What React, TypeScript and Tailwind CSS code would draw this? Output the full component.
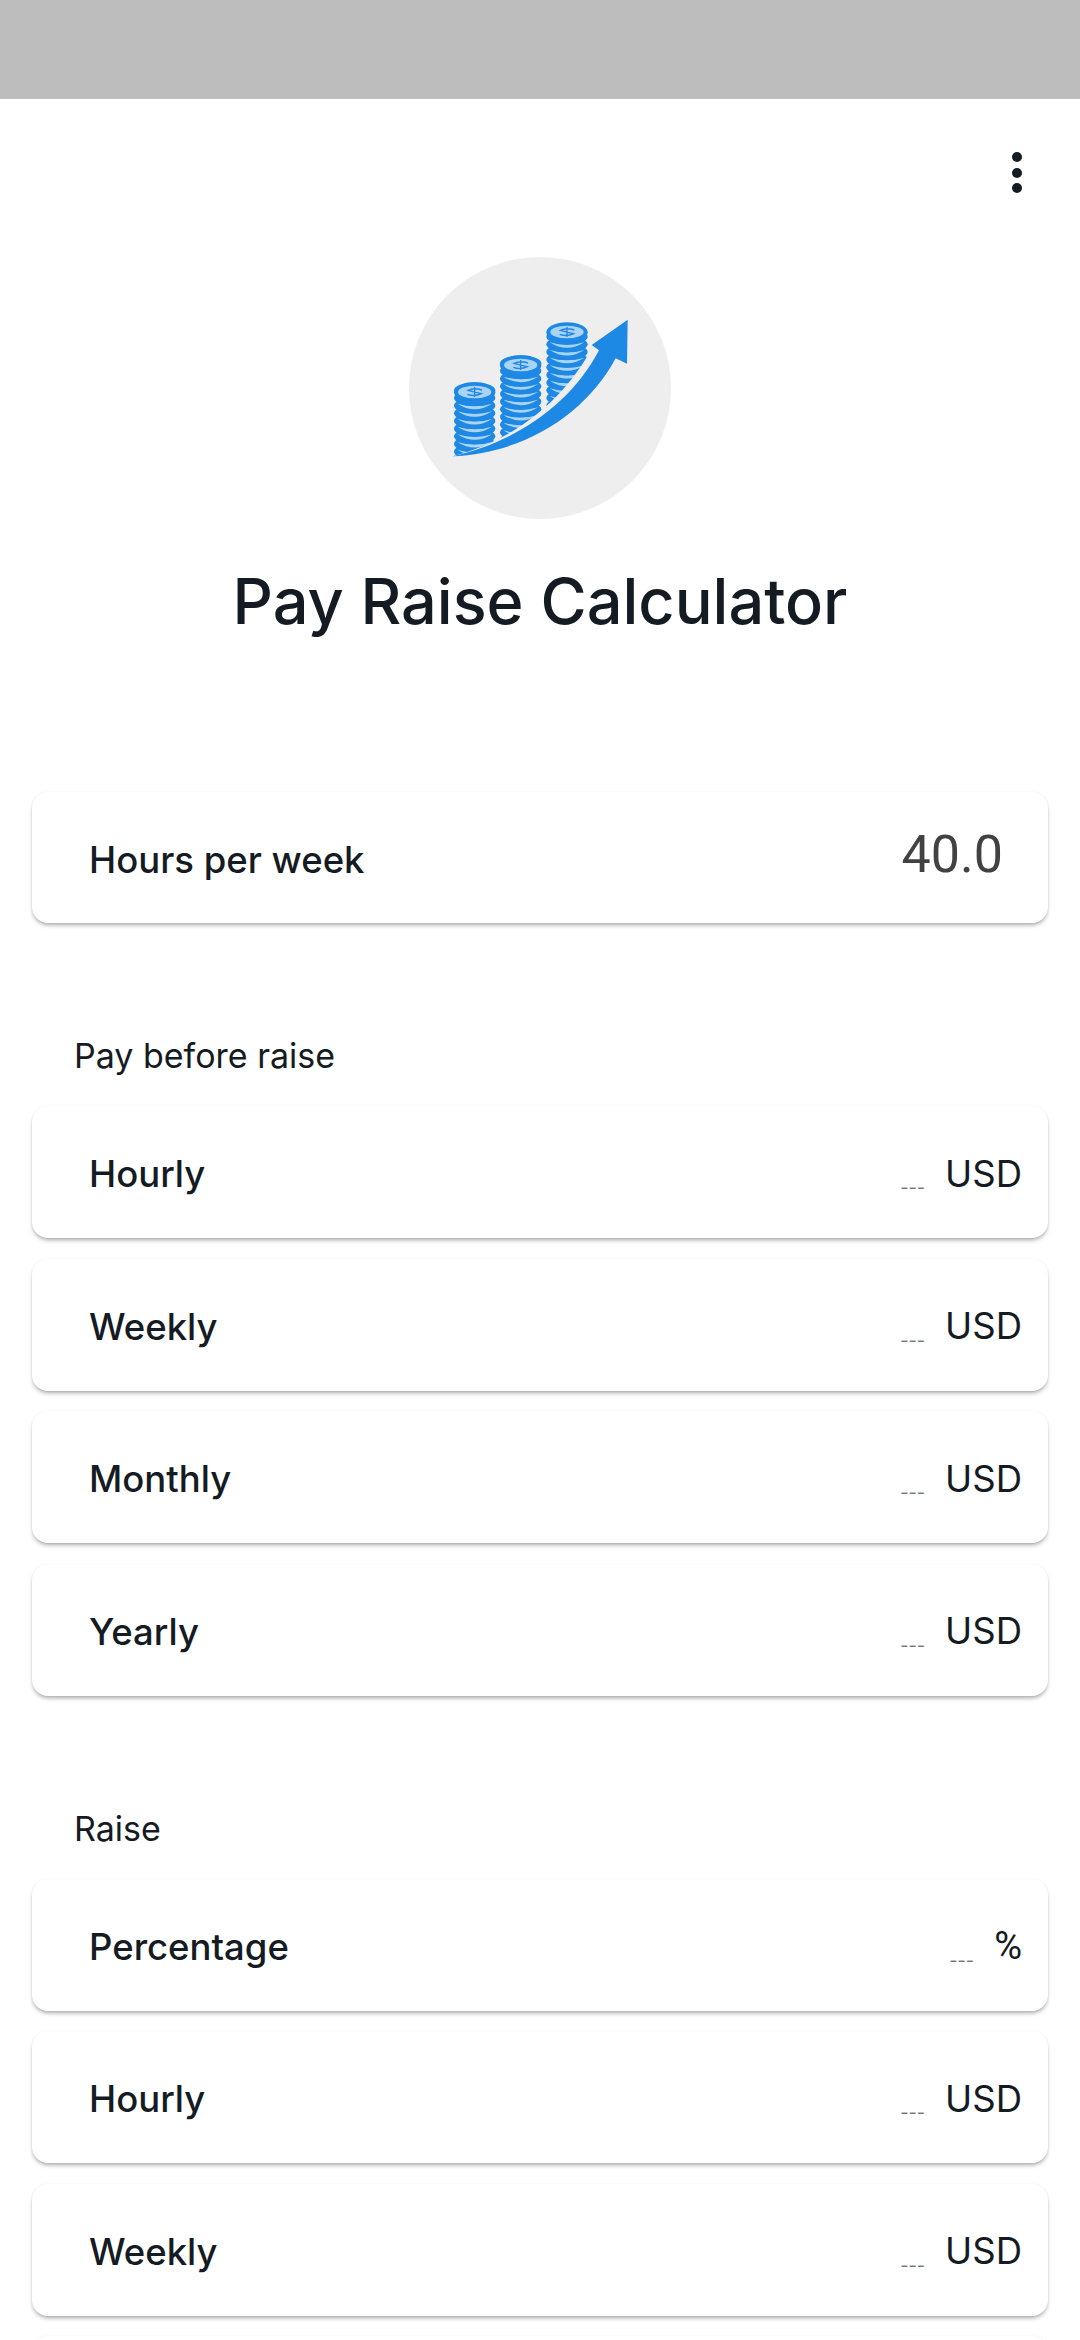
import React from 'react';

const coinBlue = '#1e88e5';
const coinLight = '#a9d4f5';
const cardShadow = 'shadow-[0_3px_4px_-1px_rgba(0,0,0,0.35),0_0_2px_rgba(0,0,0,0.05)]';

// one stack of coins, drawn bottom to top
function CoinStack({ cx, top, bottom }: { cx: number; top: number; bottom: number }) {
  const ys: number[] = [];
  for (let y = bottom - 22; y > top + 18; y -= 23) ys.push(y);
  return (
    <g>
      {ys.map((y) => (
        <g key={y}>
          <ellipse cx={cx} cy={y + 3} rx={62} ry={24} fill={coinBlue} />
          <path d={`M${cx - 52} ${y - 3} Q${cx} ${y + 30} ${cx + 52} ${y - 3} Q${cx} ${y + 12} ${cx - 52} ${y - 3} Z`} fill={coinLight} />
        </g>
      ))}
      <ellipse cx={cx} cy={top + 30} rx={62} ry={30} fill={coinBlue} />
      <ellipse cx={cx} cy={top + 29} rx={50} ry={19} fill={coinLight} />
      <path d={`M${cx + 22} ${top + 23} Q${cx} ${top + 15} ${cx - 20} ${top + 24} Q${cx} ${top + 30} ${cx + 20} ${top + 34} Q${cx} ${top + 44} ${cx - 22} ${top + 36} M${cx} ${top + 14} L${cx} ${top + 44}`} fill="none" stroke={coinBlue} strokeWidth={4} />
    </g>
  );
}

function Logo() {
  return (
    <svg viewBox="88 52 786 786" className="h-full w-full">
      <CoinStack cx={285} top={428} bottom={655} />
      <CoinStack cx={423} top={347} bottom={620} />
      <CoinStack cx={562} top={248} bottom={540} />
      {/* gap above the arrow, everything below it is cleared too */}
      <path d="M218 650 C395 605 550 490 640 320 L700 320 L720 500 L500 700 L230 700 Z" fill="#eeeeee" />
      <path d="M218 650 C400 610 570 500 658 332 L636 316 L744 240 L742 372 L708 356 C620 520 440 640 218 650 Z" fill={coinBlue} />
    </svg>
  );
}

function Row({ label, unit }: { label: string; unit: string }) {
  return (
    <div className={`flex h-[132px] items-center justify-between rounded-[16px] bg-white pl-[57px] pr-[26px] ${cardShadow}`}>
      <span className="pt-[5px] text-[36.5px] font-[450] text-[#151b23]">{label}</span>
      <div className="flex items-center pt-[4px]">
        <span className="mr-[20px] mt-[28px] text-[18px] leading-none text-[#757575]">---</span>
        {unit === '%' ? (
          <span className="font-['Roboto',sans-serif] text-[38px] text-[#151b23]">%</span>
        ) : (
          <span className="text-[36.5px] text-[#151b23]">{unit}</span>
        )}
      </div>
    </div>
  );
}

function Section({ title, rows, children }: { title: string; rows: [string, string][]; children?: React.ReactNode }) {
  return (
    <section className="mt-[108px] px-[32px]">
      <h2 className="pb-[25px] pl-[42px] text-[34px] leading-[50px] text-[#151b23]">{title}</h2>
      <div className="flex flex-col gap-[20.5px]">
        {rows.map(([label, unit]) => (
          <Row key={label} label={label} unit={unit} />
        ))}
        {children}
      </div>
    </section>
  );
}

export default function App() {
  return (
    <main className="h-[2340px] w-[1080px] overflow-hidden bg-white font-['Inter',sans-serif]">
      <div className="h-[99px] bg-[#bdbdbd]" />

      <div className="flex h-[158px] justify-end pr-[58px] pt-[53px]">
        <div className="flex h-fit flex-col gap-[5.5px]">
          <span className="h-[10px] w-[10px] rounded-full bg-[#151b23]" />
          <span className="h-[10px] w-[10px] rounded-full bg-[#151b23]" />
          <span className="h-[10px] w-[10px] rounded-full bg-[#151b23]" />
        </div>
      </div>

      <div className="flex flex-col items-center">
        <div className="h-[262px] w-[262px] rounded-full bg-[#eeeeee]">
          <Logo />
        </div>
        <h1 className="mt-[43px] text-[63px] font-[450] leading-[78px] text-[#151b23]">Pay Raise Calculator</h1>
      </div>

      <div className="mt-[152px] px-[32px]">
        <div className={`flex h-[131px] items-center justify-between rounded-[16px] bg-white pl-[57px] pr-[45px] ${cardShadow}`}>
          <span className="pt-[5px] text-[36.5px] font-[450] text-[#151b23]">Hours per week</span>
          <span className="pb-[6px] font-['Roboto',sans-serif] text-[52px] text-[#424242]">40.0</span>
        </div>
      </div>

      <Section
        title="Pay before raise"
        rows={[
          ['Hourly', 'USD'],
          ['Weekly', 'USD'],
          ['Monthly', 'USD'],
          ['Yearly', 'USD'],
        ]}
      />
      <Section
        title="Raise"
        rows={[
          ['Percentage', '%'],
          ['Hourly', 'USD'],
          ['Weekly', 'USD'],
        ]}
      >
        {/* only the top edge of this card is on screen */}
        <div className={`h-[132px] rounded-[16px] bg-white ${cardShadow}`} />
      </Section>
    </main>
  );
}
